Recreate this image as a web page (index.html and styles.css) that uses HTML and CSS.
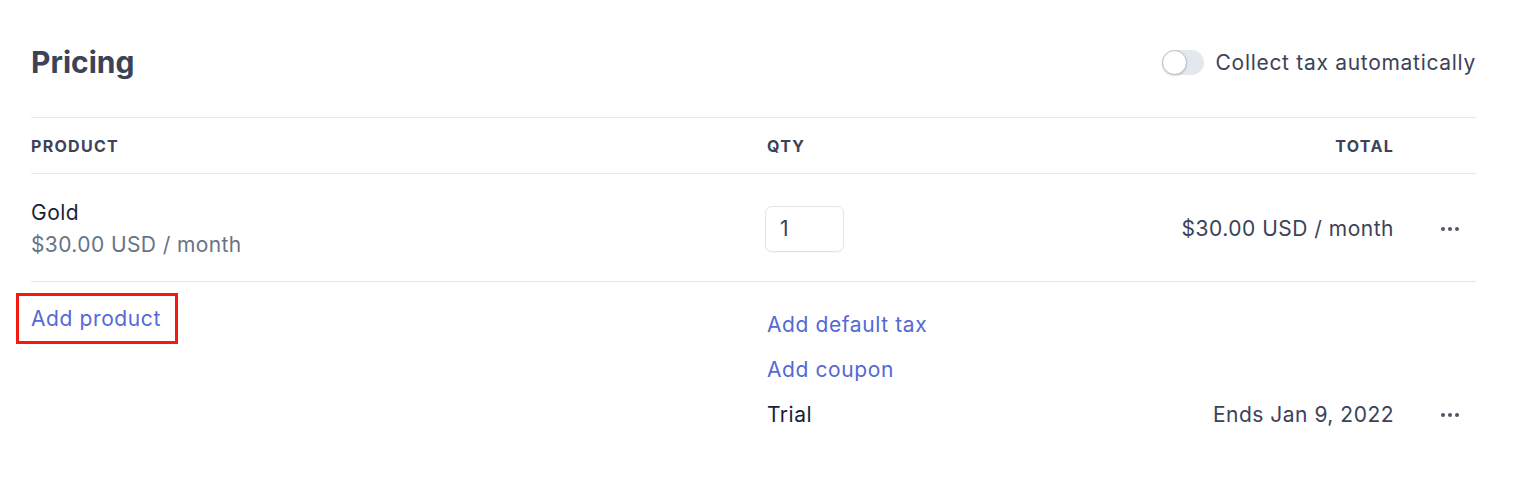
FILE: index.html
```html
<!DOCTYPE html>
<html>
<head>
<meta charset="utf-8">
<link rel="stylesheet" href="styles.css">
</head>
<body>
<div class="pricing">
  <div class="top">
    <h1 class="title">Pricing</h1>
    <label class="toggle-wrap">
      <span class="toggle"><span class="knob"></span></span>
      <span class="toggle-label">Collect tax automatically</span>
    </label>
  </div>
  <div class="table">
    <div class="row head">
      <div class="cell">PRODUCT</div>
      <div class="cell">QTY</div>
      <div class="cell right">TOTAL</div>
      <div class="cell"></div>
    </div>
    <div class="row item">
      <div class="cell product">
        <div class="name">Gold</div>
        <div class="sub">$30.00 USD / month</div>
      </div>
      <div class="cell"><div class="qty">1</div></div>
      <div class="cell right amount">$30.00 USD / month</div>
      <div class="cell actions">
        <svg class="dots" width="18" height="4" viewBox="0 0 18 4"><circle cx="2" cy="2" r="2"/><circle cx="9" cy="2" r="2"/><circle cx="16" cy="2" r="2"/></svg>
      </div>
    </div>
  </div>
  <div class="lower">
    <div class="left">
      <a class="link add-product">Add product</a>
    </div>
    <div class="extras">
      <div class="extra"><a class="link">Add default tax</a></div>
      <div class="extra"><a class="link">Add coupon</a></div>
      <div class="extra trial">
        <span class="trial-label">Trial</span>
        <span class="amount right">Ends Jan 9, 2022</span>
        <span class="actions">
          <svg class="dots" width="18" height="4" viewBox="0 0 18 4"><circle cx="2" cy="2" r="2"/><circle cx="9" cy="2" r="2"/><circle cx="16" cy="2" r="2"/></svg>
        </span>
      </div>
    </div>
  </div>
</div>
</body>
</html>
```
FILE: styles.css
```css
* { box-sizing: border-box; }
html, body { margin: 0; padding: 0; background: #fff; }
body {
  font-family: Inter, "Noto Sans", "Liberation Sans", sans-serif;
  color: #1a1f36;
  font-size: 21px;
  letter-spacing: 0.5px;
}
.pricing {
  width: 1445px;
  margin-left: 31px;
  padding-top: 44px;
}
.top {
  display: flex;
  align-items: center;
  justify-content: space-between;
  height: 36px;
  margin-bottom: 37px;
}
.title {
  margin: 0;
  font-size: 30px;
  line-height: 36px;
  font-weight: 700;
  color: #3c4257;
  letter-spacing: 0;
}
.toggle-wrap {
  display: flex;
  align-items: center;
  gap: 12px;
  padding-top: 1px;
}
.toggle {
  position: relative;
  width: 42px;
  height: 25px;
  border-radius: 13px;
  background: #e3e8ee;
}
.knob {
  position: absolute;
  left: 0;
  top: 0;
  width: 25px;
  height: 25px;
  border-radius: 50%;
  background: #fff;
  border: 1px solid #b9c0ca;
  box-shadow: 0 1px 2px rgba(0,0,0,0.15);
}
.toggle-label {
  line-height: 28px;
  color: #3c4257;
  letter-spacing: 0.7px;
}
.row {
  display: grid;
  grid-template-columns: 734px 200px 1fr 82px;
  align-items: center;
  border-top: 1px solid #e3e8ee;
}
.head {
  height: 56px;
  font-size: 16px;
  font-weight: 700;
  letter-spacing: 1.3px;
  color: #3c4257;
}
.head .cell:nth-child(2) { padding-left: 2px; }
.right { text-align: right; }
.item {
  padding: 23px 0 20px;
  border-bottom: 1px solid #e3e8ee;
}
.name { line-height: 32px; color: #1a1f36; }
.sub { line-height: 32px; color: #697386; letter-spacing: 0.4px; }
.qty {
  width: 79px;
  height: 46px;
  border: 1px solid #e0e3e8;
  border-radius: 7px;
  padding-left: 14px;
  line-height: 44px;
  color: #3c4257;
  box-shadow: 0 1px 1px rgba(0,0,0,0.03);
}
.amount { color: #3c4257; line-height: 32px; }
.actions {
  display: flex;
  justify-content: flex-end;
  padding-right: 17px;
}
.dots { fill: #4f566b; display: block; }
.lower {
  display: grid;
  grid-template-columns: 734px 1fr;
}
.left { padding-top: 21px; }
.link {
  color: #5469d4;
  line-height: 32px;
  display: inline-block;
  cursor: pointer;
  letter-spacing: 0.6px;
}
.add-product { position: relative; }
.add-product::after {
  content: "";
  position: absolute;
  box-sizing: border-box;
  left: -15px;
  top: -10px;
  width: 162px;
  height: 51px;
  border: 3px solid #f31a10;
}
.extras {
  padding-top: 27px;
  padding-left: 2px;
}
.extra {
  height: 45px;
  line-height: 32px;
}
.trial {
  display: grid;
  grid-template-columns: 1fr auto 82px;
  align-items: center;
  height: 32px;
}
.trial-label { color: #1a1f36; }
.trial .actions { padding-right: 17px; }
```
